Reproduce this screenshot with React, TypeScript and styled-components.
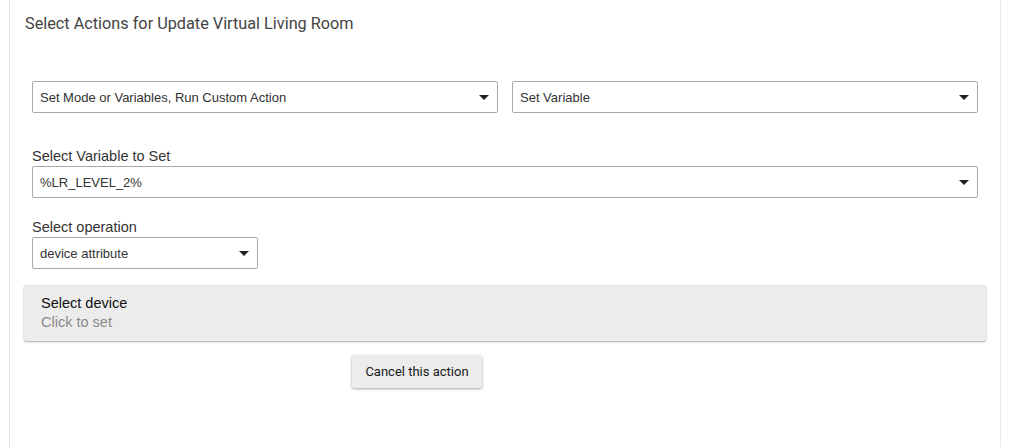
import React from 'react';
import styled, { createGlobalStyle } from 'styled-components';

/* -------------------- Global -------------------- */
const GlobalStyle = createGlobalStyle`
  html, body {
    margin: 0;
    padding: 0;
    background: #fff;
  }
  body {
    font-family: Roboto, "Liberation Sans", Arial, sans-serif;
  }
`;

/* -------------------- Parts -------------------- */
const Card = styled.div`
  box-sizing: border-box;
  margin-left: 9px;
  width: 992px;
  min-height: 447px;
  background: #fff;
  border-left: 1px solid #e4e4e4;
  border-right: 1px solid #e8e8e8;
  padding-top: 14px;
`;

const Title = styled.div`
  padding-left: 15px;
  font-family: Roboto, sans-serif;
  font-size: 16.25px;
  line-height: 20px;
  color: #444;
`;

const Form = styled.div`
  padding-left: 22px;
  width: 946px;
  display: flex;
  flex-direction: column;
`;

const SelectRow = styled.div`
  display: flex;
  gap: 14px;
  margin-top: 47px;
`;

const Field = styled.div<{ $top: number }>`
  display: flex;
  flex-direction: column;
  margin-top: ${(p) => p.$top}px;
`;

const Label = styled.div`
  font-family: "Liberation Sans", Arial, sans-serif;
  font-size: 14.5px;
  line-height: 18px;
  color: #333;
  margin-bottom: 1px;
`;

const SelectBox = styled.div<{ $width: number }>`
  box-sizing: border-box;
  width: ${(p) => p.$width}px;
  height: 32px;
  border: 1px solid #a9a9a9;
  border-radius: 2px;
  background: #fff;
  display: flex;
  align-items: center;
  justify-content: space-between;
  padding: 0 8px 0 7px;
  font-family: "Liberation Sans", Arial, sans-serif;
  font-size: 13px;
  color: #333;
`;

const Arrow = styled.span`
  width: 0;
  height: 0;
  border-left: 5px solid transparent;
  border-right: 5px solid transparent;
  border-top: 5px solid #222;
`;

const DevicePanel = styled.div`
  box-sizing: border-box;
  margin: 16px 0 0 14px;
  width: 962px;
  height: 56px;
  background: #ececec;
  border-radius: 2px;
  box-shadow: 0 1px 2px rgba(0, 0, 0, 0.35);
  padding: 10px 17px 0;
  font-family: "Liberation Sans", Arial, sans-serif;
  font-size: 14.5px;
`;

const PanelTitle = styled.div`
  color: #111;
  line-height: 17px;
`;

const PanelHint = styled.div`
  color: #8a8a8a;
  line-height: 20px;
`;

const CancelButton = styled.button`
  margin: 14px 0 0 342px;
  width: 130px;
  height: 33px;
  border: none;
  border-radius: 2px;
  background: #ececec;
  box-shadow: 0 1px 3px rgba(0, 0, 0, 0.35);
  font-family: Roboto, sans-serif;
  font-weight: 400;
  font-size: 13px;
  color: #1a1a1a;
  cursor: pointer;
  display: block;
`;

/* -------------------- DOM -------------------- */
const Select = ({ value, width }: { value: string; width: number }) => (
  <SelectBox $width={width}>
    <span>{value}</span>
    <Arrow />
  </SelectBox>
);

export default function App() {
  return (
    <>
      <GlobalStyle />
      <Card>
        <Title>Select Actions for Update Virtual Living Room</Title>
        <Form>
          <SelectRow>
            <Select value="Set Mode or Variables, Run Custom Action" width={466} />
            <Select value="Set Variable" width={466} />
          </SelectRow>
          <Field $top={34}>
            <Label>Select Variable to Set</Label>
            <Select value="%LR_LEVEL_2%" width={946} />
          </Field>
          <Field $top={20}>
            <Label>Select operation</Label>
            <Select value="device attribute" width={226} />
          </Field>
        </Form>
        <DevicePanel>
          <PanelTitle>Select device</PanelTitle>
          <PanelHint>Click to set</PanelHint>
        </DevicePanel>
        <CancelButton>Cancel this action</CancelButton>
      </Card>
    </>
  );
}
